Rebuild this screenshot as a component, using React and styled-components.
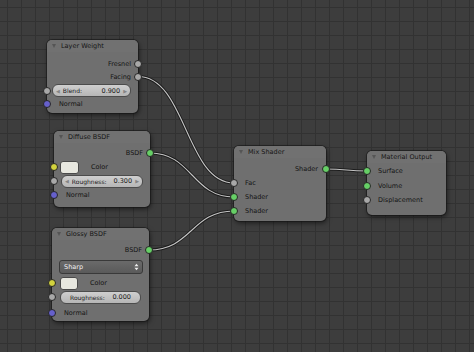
import React from 'react';
import styled, { createGlobalStyle } from 'styled-components';

const GlobalStyle = createGlobalStyle`
  html, body {
    margin: 0;
    padding: 0;
    background: #3b3b3b;
  }
`;

const Canvas = styled.div`
  position: relative;
  width: 474px;
  height: 352px;
  overflow: hidden;
  font-family: 'DejaVu Sans', 'Liberation Sans', sans-serif;
  background-color: #3d3d3d;
  background-image:
    linear-gradient(to right, #323232 1px, transparent 1px),
    linear-gradient(to bottom, #323232 1px, transparent 1px);
  background-size: 14px 14px;
  background-position: 7px 7px;
`;

const Wires = styled.svg`
  position: absolute;
  left: 0;
  top: 0;
  width: 474px;
  height: 352px;
`;

const Node = styled.div`
  position: absolute;
  left: ${({ x }) => x}px;
  top: ${({ y }) => y}px;
  width: ${({ w }) => w}px;
  height: ${({ h }) => h}px;
  box-sizing: border-box;
  background: #6f6f6f;
  border-radius: 5px;
  box-shadow: 0 0 0 1px rgba(20, 20, 20, 0.55), 1px 2px 5px rgba(0, 0, 0, 0.55);
  display: flex;
  flex-direction: column;
`;

const Header = styled.div`
  height: 12px;
  display: flex;
  align-items: center;
  padding-left: 5px;
  gap: 5px;
  border-radius: 5px 5px 0 0;
  background: #717171;
`;

const Caret = styled.span`
  width: 0;
  height: 0;
  border-style: solid;
  border-width: 4px 2.5px 0 2.5px;
  border-color: #555 transparent transparent transparent;
`;

const Title = styled.span`
  font-size: 6.5px;
  color: #151515;
  white-space: nowrap;
`;

const Body = styled.div`
  padding-top: ${({ pad }) => pad}px;
  display: flex;
  flex-direction: column;
`;

const Row = styled.div`
  position: relative;
  height: ${({ h }) => h || 14}px;
  display: flex;
  align-items: center;
  justify-content: ${({ out }) => (out ? 'flex-end' : 'flex-start')};
  padding: ${({ pad }) => pad || '0 7px 0 12px'};
  box-sizing: border-box;
`;

const Label = styled.span`
  font-size: 6.5px;
  color: #141414;
  white-space: nowrap;
  margin-left: ${({ ml }) => ml || 0}px;
`;

const Socket = styled.span`
  position: absolute;
  top: 50%;
  ${({ out }) => (out ? 'right: -4px;' : 'left: -4px;')}
  width: 6px;
  height: 6px;
  margin-top: -4px;
  border-radius: 50%;
  background: ${({ color }) => color};
  border: 1px solid #262626;
`;

const Field = styled.div`
  flex: 1;
  height: 11px;
  display: flex;
  align-items: center;
  padding: 0 3px;
  gap: 3px;
  border-radius: 6px;
  background: linear-gradient(#cfcfcf, #b6b6b6);
  border: 1px solid #4c4c4c;
  color: #1a1a1a;
`;

const Arrow = styled.span`
  font-size: 5px;
  color: #858585;
`;

const FieldLabel = styled.span`
  font-size: 6px;
  flex: 1;
  white-space: nowrap;
  padding-left: ${({ pl }) => pl || 0}px;
`;

const FieldValue = styled.span`
  font-size: 6.5px;
  padding-right: ${({ pr }) => pr || 0}px;
`;

const Swatch = styled.div`
  width: ${({ w }) => w}px;
  height: 11px;
  border-radius: 3px;
  background: #e7e7df;
  border: 1px solid #4a4a4a;
`;

const Menu = styled.div`
  flex: 1;
  height: 12px;
  display: flex;
  align-items: center;
  justify-content: space-between;
  padding: 0 3px 0 4px;
  border-radius: 3px;
  background: linear-gradient(#6a6a6a, #5a5a5a);
  border: 1px solid #393939;
  color: #f2f2f2;
  font-size: 6.5px;
`;

const SOCKET = {
  value: '#a8a8a8',
  color: '#d3d33e',
  vector: '#6660cc',
  shader: '#66cf66',
};

const wires = [
  [138, 76.5, 234, 183],
  [150, 153, 234, 197],
  [149, 250, 234, 211],
  [326, 169, 367, 171],
];

function wirePath([x1, y1, x2, y2]) {
  const d = (x2 - x1) * 0.5;
  return `M ${x1} ${y1} C ${x1 + d} ${y1}, ${x2 - d} ${y2}, ${x2} ${y2}`;
}

function UpDown() {
  return (
    <svg width="5" height="8" viewBox="0 0 5 8">
      <path d="M0.5 3.2 L2.5 0.8 L4.5 3.2 Z" fill="#f0f0f0" />
      <path d="M0.5 4.8 L2.5 7.2 L4.5 4.8 Z" fill="#f0f0f0" />
    </svg>
  );
}

function NodeHead({ title }) {
  return (
    <Header>
      <Caret />
      <Title>{title}</Title>
    </Header>
  );
}

export default function App() {
  return (
    <Canvas>
      <GlobalStyle />
      <Wires viewBox="0 0 474 352">
        {wires.map((w, i) => (
          <g key={i} fill="none">
            <path d={wirePath(w)} stroke="#1c1c1c" strokeWidth="3" />
            <path d={wirePath(w)} stroke="#c4c4c4" strokeWidth="1.1" />
          </g>
        ))}
      </Wires>

      <Node x={47} y={40} w={91} h={73}>
        <NodeHead title="Layer Weight" />
        <Body pad={5}>
          <Row out h={13.5}>
            <Label>Fresnel</Label>
            <Socket out color={SOCKET.value} />
          </Row>
          <Row out h={13.5}>
            <Label>Facing</Label>
            <Socket out color={SOCKET.value} />
          </Row>
          <Row h={13.5} pad="0 7px 0 5px">
            <Socket color={SOCKET.value} />
            <Field>
              <Arrow>◀</Arrow>
              <FieldLabel>Blend:</FieldLabel>
              <FieldValue>0.900</FieldValue>
              <Arrow>▶</Arrow>
            </Field>
          </Row>
          <Row h={13.5}>
            <Socket color={SOCKET.vector} />
            <Label>Normal</Label>
          </Row>
        </Body>
      </Node>

      <Node x={54} y={131} w={96} h={76}>
        <NodeHead title="Diffuse BSDF" />
        <Body pad={3}>
          <Row out>
            <Label>BSDF</Label>
            <Socket out color={SOCKET.shader} />
          </Row>
          <Row pad="0 7px 0 6px">
            <Socket color={SOCKET.color} />
            <Swatch w={17} />
            <Label ml={12}>Color</Label>
          </Row>
          <Row pad="0 7px 0 7px">
            <Socket color={SOCKET.value} />
            <Field>
              <Arrow>◀</Arrow>
              <FieldLabel>Roughness:</FieldLabel>
              <FieldValue>0.300</FieldValue>
              <Arrow>▶</Arrow>
            </Field>
          </Row>
          <Row>
            <Socket color={SOCKET.vector} />
            <Label>Normal</Label>
          </Row>
        </Body>
      </Node>

      <Node x={52} y={228} w={97} h={93}>
        <NodeHead title="Glossy BSDF" />
        <Body pad={3}>
          <Row out>
            <Label>BSDF</Label>
            <Socket out color={SOCKET.shader} />
          </Row>
          <Row h={19} pad="0 6px 0 7px">
            <Menu>
              <span>Sharp</span>
              <UpDown />
            </Menu>
          </Row>
          <Row pad="0 7px 0 8px">
            <Socket color={SOCKET.color} />
            <Swatch w={16} />
            <Label ml={12}>Color</Label>
          </Row>
          <Row pad="0 8px 0 8px">
            <Socket color={SOCKET.value} />
            <Field>
              <FieldLabel pl={6}>Roughness:</FieldLabel>
              <FieldValue pr={6}>0.000</FieldValue>
            </Field>
          </Row>
          <Row h={17}>
            <Socket color={SOCKET.vector} />
            <Label>Normal</Label>
          </Row>
        </Body>
      </Node>

      <Node x={234} y={146} w={92} h={75}>
        <NodeHead title="Mix Shader" />
        <Body pad={4}>
          <Row out pad="0 8px 0 12px">
            <Label>Shader</Label>
            <Socket out color={SOCKET.shader} />
          </Row>
          <Row pad="0 7px 0 11px">
            <Socket color={SOCKET.value} />
            <Label>Fac</Label>
          </Row>
          <Row pad="0 7px 0 11px">
            <Socket color={SOCKET.shader} />
            <Label>Shader</Label>
          </Row>
          <Row pad="0 7px 0 11px">
            <Socket color={SOCKET.shader} />
            <Label>Shader</Label>
          </Row>
        </Body>
      </Node>

      <Node x={367} y={151} w={79} h={64}>
        <NodeHead title="Material Output" />
        <Body pad={1}>
          <Row h={14.5} pad="0 7px 0 11px">
            <Socket color={SOCKET.shader} />
            <Label>Surface</Label>
          </Row>
          <Row h={14.5} pad="0 7px 0 11px">
            <Socket color={SOCKET.shader} />
            <Label>Volume</Label>
          </Row>
          <Row h={14.5} pad="0 7px 0 11px">
            <Socket color={SOCKET.value} />
            <Label>Displacement</Label>
          </Row>
        </Body>
      </Node>
    </Canvas>
  );
}
